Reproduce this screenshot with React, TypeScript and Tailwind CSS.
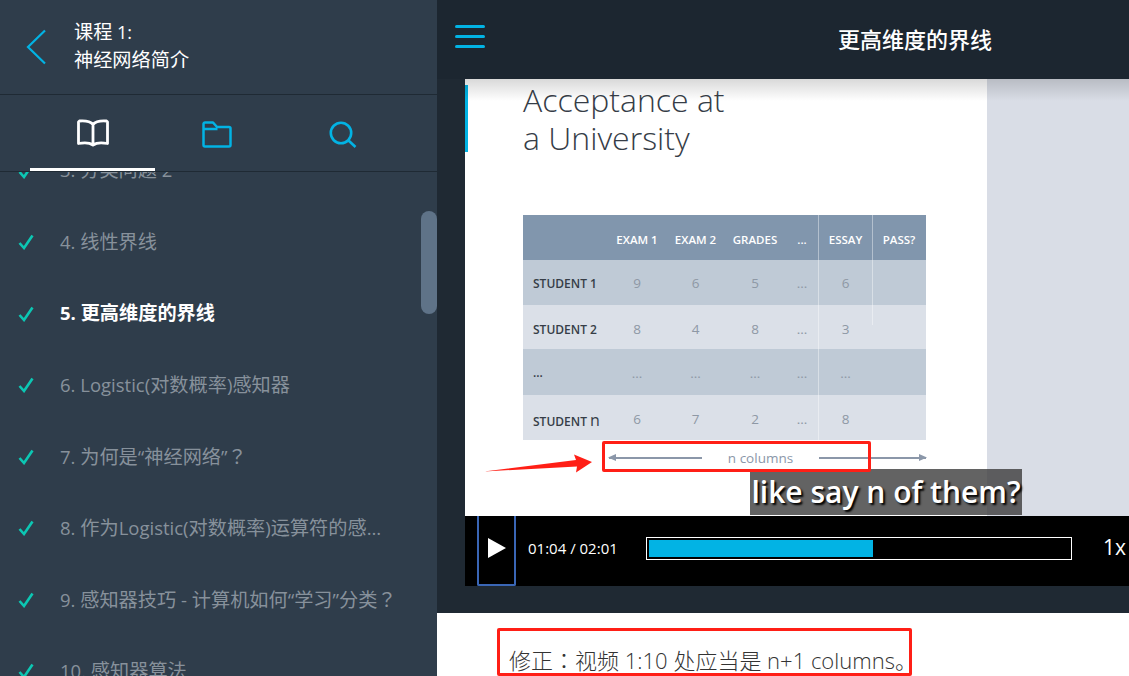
const font = "font-['Open_Sans','Noto_Sans_CJK_SC',sans-serif]"

const lessons = [
  { label: '3. 分类问题 2' },
  { label: '4. 线性界线' },
  { label: '5. 更高维度的界线', active: true },
  { label: '6. Logistic(对数概率)感知器' },
  { label: '7. 为何是“神经网络”？' },
  { label: '8. 作为Logistic(对数概率)运算符的感知器', clip: true },
  { label: '9. 感知器技巧 - 计算机如何“学习”分类？' },
  { label: '10. 感知器算法' },
]

const columns = ['EXAM 1', 'EXAM 2', 'GRADES', '...', 'ESSAY', 'PASS?']

const rows = [
  { name: 'STUDENT 1', values: ['9', '6', '5', '...', '6', ''], cls: 'h-[45px] pt-[2px] bg-[#bfcad6]' },
  { name: 'STUDENT 2', values: ['8', '4', '8', '...', '3', ''], cls: 'h-[44px] pt-[5px] bg-[#dbe0e8]' },
  { name: '...', values: ['...', '...', '...', '...', '...', ''], cls: 'h-[46px] pt-[2px] bg-[#bfcad6]' },
  { name: 'STUDENT ', values: ['6', '7', '2', '...', '8', ''], cls: 'h-[45px] pt-[4px] bg-[#dbe0e8]' },
]

const gridCols = 'grid-cols-[85px_58px_59px_60px_34px_53px_54px]'

// the CJK face runs a little larger than the latin one in the sidebar
function Mixed({ text, cjk = 'text-[19.2px]' }: { text: string; cjk?: string }) {
  return (
    <>
      {text.split(/([\u4e00-\u9fff]+|？)/).map((part, i) => {
        if (part === '？') {
          return (
            <span key={i} className={`${cjk} font-['Noto_Sans_CJK_TC']`}>
              {part}
            </span>
          )
        }
        return i % 2 === 1 ? (
          <span key={i} className={cjk}>
            {part}
          </span>
        ) : (
          part
        )
      })}
    </>
  )
}

function Check() {
  return (
    <svg width="16" height="16" viewBox="0 0 16 16" fill="none" className="shrink-0 text-[#0cc7b3]">
      <path d="M1.500 9l4.500 5L14.500 1.500" stroke="currentColor" strokeWidth="2.600" />
    </svg>
  )
}

function Sidebar() {
  return (
    <aside className="w-[437px] h-full shrink-0 bg-[#2f3d4b] flex flex-col relative overflow-hidden">
      <div className="h-[95px] shrink-0 border-b border-[#1f2a34] flex items-center pl-[26px] gap-[28px]">
        <svg width="20" height="36" viewBox="0 0 20 36" fill="none" className="text-[#02b3e4]">
          <path d="M19 1.500L2 18l17 16.500" stroke="currentColor" strokeWidth="2.200" />
        </svg>
        <div className="text-[18px] leading-[28px] text-white -mt-[2px]">
          <div>
            <Mixed text="课程 1:" />
          </div>
          <div>
            <Mixed text="神经网络简介" />
          </div>
        </div>
      </div>

      <div className="h-[77px] shrink-0 border-b border-[#1f2a34] px-[30px] grid grid-cols-[125px_125px_125px] relative z-10 bg-[#2f3d4b]">
        <div className="flex items-center justify-center border-b-[3px] border-white h-[76px] pt-[3px]">
          <svg width="34" height="28" viewBox="0 0 34 28" fill="none" className="text-white">
            <path
              d="M17 5.500C14.500 2.500 10 1.500 3.500 2L2.500 3v21.500c6-1.200 11-1 14.500 1.500 3.500-2.500 8.500-2.700 14.500-1.500V3l-1-1C24 1.500 19.500 2.500 17 5.500zM17 5.500V25"
              stroke="currentColor"
              strokeWidth="2.800"
              strokeLinejoin="round"
            />
          </svg>
        </div>
        <div className="flex items-center justify-center pt-[2px] pr-[2px]">
          <svg width="30" height="27" viewBox="0 0 30 27" fill="none" className="text-[#02b3e4]">
            <path
              d="M1.500 3a1.500 1.500 0 0 1 1.500-1.500h8l4 4.500h12a1.500 1.500 0 0 1 1.500 1.500V24a1.500 1.500 0 0 1-1.500 1.500H3A1.500 1.500 0 0 1 1.500 24zM1.500 8h14"
              stroke="currentColor"
              strokeWidth="2.500"
              strokeLinejoin="round"
            />
          </svg>
        </div>
        <div className="flex items-center justify-center pt-[3px]">
          <svg width="28" height="27" viewBox="0 0 28 27" fill="none" className="text-[#02b3e4]">
            <circle cx="12" cy="12" r="10.200" stroke="currentColor" strokeWidth="2.600" />
            <path d="M19.500 19.500L26.500 26" stroke="currentColor" strokeWidth="2.600" />
          </svg>
        </div>
      </div>

      <div className="flex-1 overflow-hidden">
        <ul className="-mt-[37px] pl-[18px]">
          {lessons.map((lesson) => (
            <li key={lesson.label} className="h-[71.500px] flex items-center">
              <Check />
              <span
                className={`ml-[26px] text-[18.500px] ${lesson.clip ? 'w-[328px] truncate' : 'whitespace-nowrap'} ${
                  lesson.active ? 'font-bold text-white' : 'font-medium text-[#87919b]'
                }`}
              >
                <Mixed text={lesson.label} cjk={lesson.active ? 'text-[19.2px] font-bold' : 'text-[19.2px] font-normal'} />
              </span>
            </li>
          ))}
        </ul>
      </div>

      <div className="absolute left-[421px] top-[211px] w-[16px] h-[103px] rounded-full bg-[#5f7388]" />
    </aside>
  )
}

function SlideTable() {
  return (
    <div className="w-[403px] relative font-semibold">
      <div className={`grid ${gridCols} h-[45px] pt-[5px] items-center text-center text-[11.500px] text-white bg-[#8196ad]`}>
        <div />
        {columns.map((col) => (
          <div key={col}>{col}</div>
        ))}
      </div>
      {rows.map((row) => (
        <div key={row.name} className={`grid ${gridCols} items-center text-center ${row.cls}`}>
          <div className="pl-[10px] text-left text-[12px] text-[#363d47] whitespace-nowrap">
            {row.name}
            {row.name === 'STUDENT ' && <span className="text-[16px] font-normal">n</span>}
          </div>
          {row.values.map((v, j) => (
            <div key={j} className="text-[13.500px] font-normal text-[#8e98a5]">
              {v}
            </div>
          ))}
        </div>
      ))}
      {/* column rules sit over the rows */}
      <div className="absolute left-[295px] top-0 bottom-0 w-px bg-white/40" />
      <div className="absolute left-[349px] top-0 h-[110px] w-px bg-white/40" />
    </div>
  )
}

function Slide() {
  return (
    <div className="h-[437px] flex relative">
      <div className="w-[522px] bg-white pl-[58px] pt-[2px] relative">
        <div className="absolute left-0 top-[6px] w-[3px] h-[67px] bg-[#02b3e4]" />
        <div className="text-[32px] leading-[38px] font-light text-[#363d47]">
          <div>Acceptance at</div>
          <div>a University</div>
        </div>
        <div className="mt-[58px]">
          <SlideTable />
        </div>
        <div className="w-[403px] mt-[8px] flex items-center text-[#8b97a9]">
          <div className="ml-[86px] w-[93px] h-[2px] bg-[#8b97a9]" />
          <span className="w-[117px] text-center text-[13.500px] font-normal">n columns</span>
          <div className="w-[107px] h-[2px] bg-[#8b97a9]" />
        </div>
      </div>
      <div className="flex-1 bg-[#d9dde6]" />
      <div className="absolute inset-x-0 top-0 h-[22px] bg-gradient-to-b from-black/15 to-transparent" />
    </div>
  )
}

function Controls() {
  return (
    <div className="h-[70px] bg-black flex items-center pl-[12px] pb-[6px] text-white">
      <div className="w-[39px] h-[70px] -mb-[6px] border-2 border-t-0 border-[#3a66b5] rounded-b-[2px] flex items-center justify-center pb-[4px]">
        <div className="w-0 h-0 border-y-[10px] border-y-transparent border-l-[18px] border-l-white" />
      </div>
      <span className="ml-[12px] w-[118px] text-[15px]">01:04 / 02:01</span>
      <div className="w-[426px] h-[23px] border border-white p-[2px]">
        <div className="w-[224px] h-full bg-[#02b3e4]" />
      </div>
      <span className="ml-[31px] text-[21px]">1x</span>
    </div>
  )
}

export default function App() {
  return (
    <div className={`w-[1129px] h-[676px] flex overflow-hidden relative ${font}`}>
      <Sidebar />
      <main className="flex-1 h-full flex flex-col bg-white">
        <header className="h-[79px] shrink-0 bg-[#1c2630] flex items-center relative z-10">
          <div className="ml-[18px] w-[30px] flex flex-col gap-[7px] -mt-[6px]">
            <div className="h-[3px] bg-[#02b3e4] rounded-sm" />
            <div className="h-[3px] bg-[#02b3e4] rounded-sm" />
            <div className="h-[3px] bg-[#02b3e4] rounded-sm" />
          </div>
          <h1 className="ml-[353px] text-[22px] font-medium text-white">更高维度的界线</h1>
        </header>
        <div className="bg-[#1f2933] pl-[28px] pb-[27px]">
          <Slide />
          <Controls />
        </div>
        <p className="pl-[72px] pt-[30px] text-[22px] font-light text-[#333] whitespace-nowrap">
          修正<span className="font-['Noto_Sans_CJK_TC']">：</span>视频 1:10 处应当是 n+1 columns。
        </p>
      </main>

      {/* video caption */}
      <div className="absolute left-[750px] top-[469px] w-[272px] h-[46px] pb-[2px] bg-[#3c3c3c]/80 flex items-center justify-center text-[30px] font-semibold text-white [text-shadow:2px_2px_2px_#000] whitespace-nowrap">
        like say n of them?
      </div>

      {/* annotations drawn on the screenshot */}
      <div className="absolute left-[602px] top-[441px] w-[269px] h-[31px] border-[3px] border-[#ff1f16] rounded-[2px]" />
      <div className="absolute left-[497px] top-[628px] w-[415px] h-[48px] border-[3px] border-[#ff1f16] rounded-[2px]" />
      <svg className="absolute left-[484px] top-[454px]" width="110" height="20" viewBox="0 0 110 20">
        <path d="M0 17.500L92 6 90 .5l18 7.500-16 10.500 1-6z" fill="#ff1f16" />
      </svg>
      <svg className="absolute left-[608px] top-[453px]" width="320" height="9" viewBox="0 0 320 9" fill="#8b97a9">
        <path d="M0 4.500L8 1v7z" />
        <path d="M319 4.500L311 1v7z" />
      </svg>
    </div>
  )
}
